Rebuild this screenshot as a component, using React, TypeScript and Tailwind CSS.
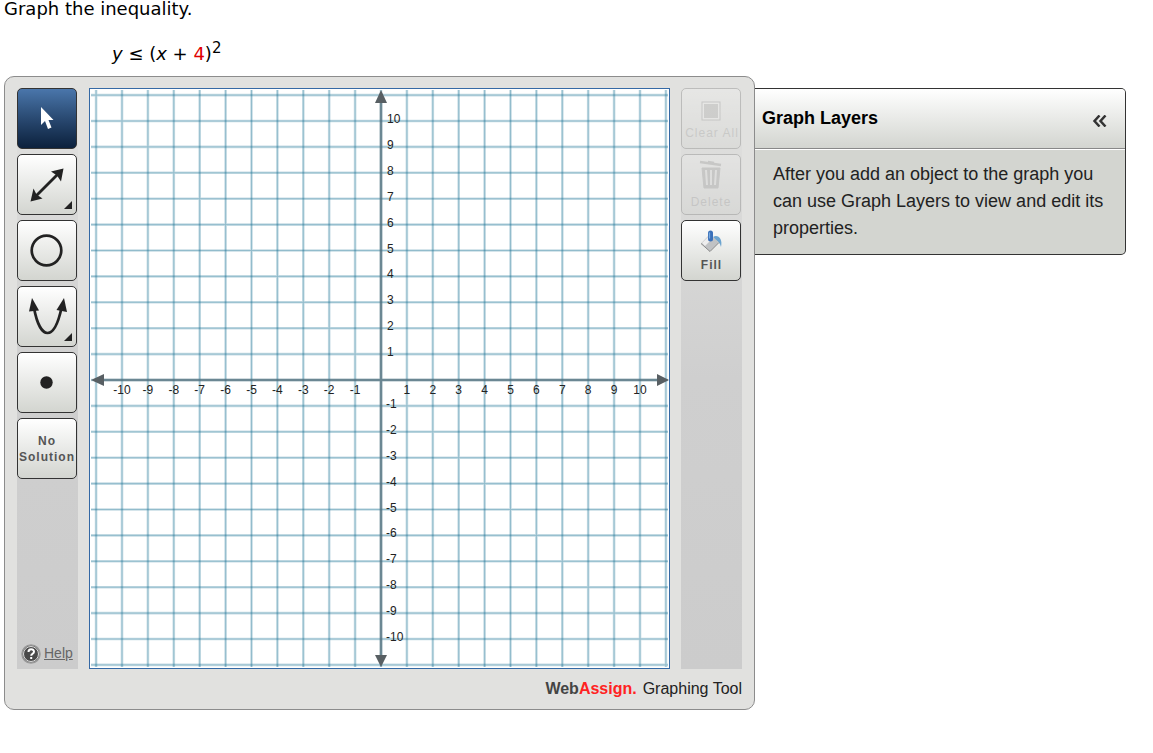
import type { ReactNode } from "react"

const UNIT = 25.9
const ORIGIN = 292
const EDGE = 579
const TICKS = Array.from({ length: 23 }, (_, i) => i - 11)
const LABELS = TICKS.filter((n) => n !== 0 && Math.abs(n) < 11)

function ToolButton({
  label,
  selected,
  disabled,
  children,
}: {
  label: string
  selected?: boolean
  disabled?: boolean
  children: ReactNode
}) {
  const look = selected
    ? "bg-linear-to-b from-[#4a76ab] to-[#0c213d]"
    : "bg-linear-to-b from-white to-[#d3d5d0]"
  return (
    <button
      type="button"
      aria-label={label}
      aria-pressed={selected}
      disabled={disabled}
      className={`flex h-[61px] w-[60px] shrink-0 flex-col items-center justify-center rounded-[5px] border border-[#333] ${look} disabled:opacity-20`}
    >
      {children}
    </button>
  )
}

function Grid() {
  return (
    <svg viewBox="0 0 581 581" className="block aspect-square min-w-0 flex-1" role="img" aria-label="Coordinate grid">
      <rect x="0.5" y="0.5" width="580" height="580" fill="#fff" stroke="#3569a5" />
      <g stroke="#1b7396">
        {TICKS.map((n) => {
          const p = ORIGIN + n * UNIT
          return (
            <g key={n}>
              <path d={`M${p} 2V${EDGE}M2 ${p}H${EDGE}`} strokeWidth="2.6" opacity="0.24" />
              <path d={`M${p} 2V${EDGE}M2 ${p}H${EDGE}`} strokeWidth="1" opacity="0.3" />
            </g>
          )
        })}
      </g>
      <path d={`M${ORIGIN} 6V575M6 ${ORIGIN}H575`} stroke="#56707c" strokeWidth="2.6" opacity="0.75" />
      <g fill="#585f63">
        <path d="M292 2l6 13h-12z" />
        <path d="M292 579l6-12h-12z" />
        <path d="M2 292l13-6v12z" />
        <path d="M580 292l-12-6v12z" />
      </g>
      <g fill="#222" fontSize="12" fontFamily="'Liberation Sans', sans-serif">
        {LABELS.map((n) => (
          <text key={`x${n}`} x={ORIGIN + n * UNIT} y="306" textAnchor="middle">
            {n}
          </text>
        ))}
        {LABELS.map((n) => (
          <text key={`y${n}`} x={n < 0 ? 297 : 298} y={ORIGIN + 2 - n * UNIT}>
            {n}
          </text>
        ))}
      </g>
    </svg>
  )
}

function LineIcon() {
  return (
    <svg width="58" height="58" viewBox="0 0 58 58" fill="#222">
      <path d="M17 41L41 17" stroke="#222" strokeWidth="2.8" />
      <path d="M12.500 45.500l3-13 3 6 6 4z" />
      <path d="M45.500 12.500l-12.500 3 6 4 4 6z" />
      <path d="M54 45v8h-8z" />
    </svg>
  )
}

function ParabolaIcon() {
  return (
    <svg width="58" height="58" viewBox="0 0 58 58" fill="#222">
      <path d="M16 20C19 36 24 45 29.500 45C35 45 40 36 43.500 20" fill="none" stroke="#222" strokeWidth="2.7" />
      <path d="M14 10l7 12.500-10 1z" />
      <path d="M46 10l-7.500 12 10.500 2z" />
      <path d="M54 45v8h-8z" />
    </svg>
  )
}

function FillIcon() {
  return (
    <svg width="24" height="24" viewBox="0 0 24 24">
      <path d="M14 8c5-3 10 2 8 10-1-4-3-6-6-7z" fill="#6ca4cf" />
      <path d="M11 5l9 8.500-9 9-9-8z" fill="#c0c2c4" />
      <path d="M3 14l8-8 3 3-8 8z" fill="#eee" />
      <path d="M2 14.500l9 8 9-9" fill="none" stroke="#8b8b8b" strokeWidth="1" />
      <path d="M11.500 4v6" stroke="#3a70b9" strokeWidth="5" strokeLinecap="round" />
      <path d="M10.500 3.500v6" stroke="#79a9de" strokeWidth="1.300" />
    </svg>
  )
}

function TrashIcon() {
  return (
    <svg width="24" height="30" viewBox="0 0 24 30" fill="none" stroke="#777">
      <path d="M1 2l21 3M9 2l6 1" strokeWidth="2.4" />
      <path d="M3 8h18l-2 20H5z" fill="#777" strokeWidth="1" />
      <path d="M7 10l1 15M12 10v15M17 10l-1 15" stroke="#e8e8e8" strokeWidth="2" />
    </svg>
  )
}

function GraphLayers() {
  return (
    <aside className="mt-3 w-[371px] shrink-0 rounded-r-[5px] border border-l-0 border-[#333] bg-[#d3d5d0]">
      <header className="flex h-15 items-center justify-between rounded-tr-[4px] border-b border-[#888] bg-linear-to-b from-white to-[#d3d5d0] pr-[18px] pl-[7px]">
        <h2 className="text-[18px] font-bold text-black">Graph Layers</h2>
        <button type="button" aria-label="Collapse Graph Layers" className="pt-1">
          <svg width="15" height="12" viewBox="0 0 15 12" fill="none" stroke="#333" strokeWidth="2.5">
            <path d="M7.500 0.500L2.500 6l5 5.500M13.500 0.500L8.500 6l5 5.500" />
          </svg>
        </button>
      </header>
      <p className="border-t border-white pt-[11px] pr-3 pb-3 pl-[18px] text-[18px] leading-[27px] text-[#222]">
        After you add an object to the graph you can use Graph Layers to view and edit its properties.
      </p>
    </aside>
  )
}

export default function App() {
  return (
    <main className="min-h-screen bg-white pr-[27px] pl-1 font-['Liberation_Sans',sans-serif]">
      <div className="font-['DejaVu_Sans',sans-serif] text-[18px] text-black">
        <p className="h-9 leading-[18px]">Graph the inequality.</p>
        <p className="h-10 pl-[108px] leading-9">
          <i>y</i> ≤ (<i>x</i> + <span className="text-[#e00000]">4</span>)<sup className="text-[15px]">2</sup>
        </p>
      </div>
      <div className="flex items-start">
        <section className="min-w-0 flex-1 rounded-[10px] border border-[#8c8c8c] bg-[#e1e1df] px-3 pt-[11px]">
          <div className="flex gap-[11px]">
            <nav className="flex w-[61px] shrink-0 flex-col gap-[5px] bg-linear-to-b from-[#e1e1df] via-[#cfcfcf] to-[#cccccc]">
              <ToolButton label="Select" selected>
                <svg width="16" height="24" viewBox="0 0 16 24" fill="#fff">
                  <path d="M2 0v18l4-4 3 8 3.500-1.500-3-7.500h5z" />
                </svg>
              </ToolButton>
              <ToolButton label="Line">
                <LineIcon />
              </ToolButton>
              <ToolButton label="Circle">
                <svg width="34" height="34" viewBox="0 0 34 34">
                  <circle cx="16.500" cy="16.500" r="14.800" fill="none" stroke="#222" strokeWidth="2.700" />
                </svg>
              </ToolButton>
              <ToolButton label="Parabola">
                <ParabolaIcon />
              </ToolButton>
              <ToolButton label="Point">
                <svg width="14" height="14" viewBox="0 0 14 14">
                  <circle cx="6.500" cy="6.500" r="6.200" fill="#222" />
                </svg>
              </ToolButton>
              <ToolButton label="No Solution">
                <span className="pt-px text-[12px] leading-4 font-bold tracking-[1px] text-[#555]">
                  No
                  <br />
                  Solution
                </span>
              </ToolButton>
              <a href="#help" className="mt-auto flex items-center gap-[3px] pb-[5px] pl-1 text-[14px] text-[#666] underline">
                <svg width="20" height="20" viewBox="0 0 20 20">
                  <circle cx="10" cy="10" r="9" fill="#555" stroke="#999" strokeWidth="1.500" />
                  <circle cx="10" cy="10" r="7.500" fill="#4a4a4a" stroke="#ddd" strokeWidth="1" />
                  <path d="M7.500 8c0-3.500 5.500-3.500 5.500-.3 0 2-2.800 2-2.800 4M10.200 13v2" fill="none" stroke="#fff" strokeWidth="2" />
                </svg>
                Help
              </a>
            </nav>
            <Grid />
            <nav className="flex w-[61px] shrink-0 flex-col gap-[5px] bg-linear-to-b from-[#e1e1df] via-[#cfcfcf] to-[#cccccc]">
              <ToolButton label="Clear All" disabled>
                <svg width="20" height="20" viewBox="0 0 20 20" className="mt-1">
                  <rect x="1" y="1" width="18" height="18" fill="#fff" stroke="#666" />
                  <rect x="3" y="3" width="14" height="14" fill="#888" />
                </svg>
                <span className="mt-1 pl-[2px] text-[12px] leading-4 tracking-[1px] whitespace-nowrap text-[#777]">Clear All</span>
              </ToolButton>
              <ToolButton label="Delete" disabled>
                <TrashIcon />
                <span className="mt-1 text-[12px] leading-4 tracking-[1px] text-[#777]">Delete</span>
              </ToolButton>
              <ToolButton label="Fill">
                <FillIcon />
                <span className="mt-1 pl-px text-[12px] leading-4 font-bold tracking-[1px] text-[#555]">Fill</span>
              </ToolButton>
            </nav>
          </div>
          <footer className="flex h-10 items-center justify-end gap-[6px] pb-px text-[16px] text-[#222]">
            <b className="text-[#444]">
              Web<span className="text-[#f22]">Assign.</span>
            </b>
            Graphing Tool
          </footer>
        </section>
        <GraphLayers />
      </div>
    </main>
  )
}
